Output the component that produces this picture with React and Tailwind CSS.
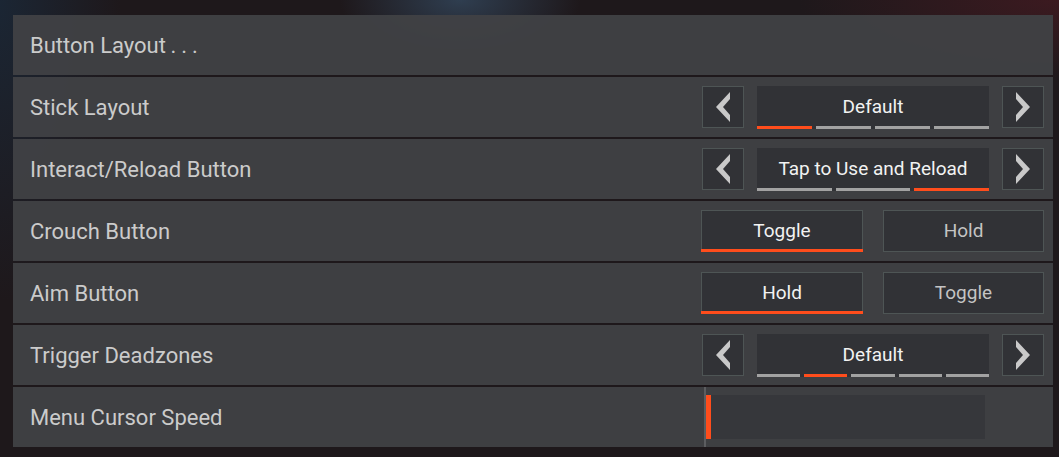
const ORANGE = 'bg-[#ff4d1c]';

function Arrow({ dir }) {
  const pts = dir === 'left' ? '28,6 28,13 21,21 28,29 28,36 14,21' : '14,6 14,13 21,21 14,29 14,36 28,21';
  return (
    <div className="w-[42px] h-[42px] shrink-0 border border-[#4e5555] bg-[#313236] flex items-center justify-center">
      <svg width="40" height="40" viewBox="1 1 40 40">
        <polygon points={pts} fill="#c9c9c9" />
      </svg>
    </div>
  );
}

function Stepper({ value, count, active }) {
  return (
    <div className="flex items-start gap-[13px]">
      <Arrow dir="left" />
      <div className="w-[232px] flex flex-col">
        <div className="h-[40px] pt-[3px] bg-[#313236] flex items-center justify-center text-[19px] text-[#f2f2f2]">
          {value}
        </div>
        <div className="flex gap-[4px] bg-[#313236]">
          {Array.from({ length: count }).map((_, i) => (
            <div key={i} className={`flex-1 h-[3px] ${i === active ? ORANGE : 'bg-[#a2a2a2]'}`} />
          ))}
        </div>
      </div>
      <Arrow dir="right" />
    </div>
  );
}

function Choice({ options, active }) {
  return (
    <div className="flex gap-[20px]">
      {options.map((opt, i) =>
        i === active ? (
          <div key={opt} className="w-[162px] h-[42px] flex flex-col">
            <div className="h-[39px] border border-b-0 border-[#4e5555] bg-[#313236] flex items-center justify-center text-[19px] text-[#f2f2f2] pt-[2px]">
              {opt}
            </div>
            <div className={`h-[3px] ${ORANGE}`} />
          </div>
        ) : (
          <div key={opt} className="w-[161px] h-[42px] border border-[#4e5555] bg-[#313236] flex items-center justify-center text-[19px] text-[#c4c4c4]">
            {opt}
          </div>
        )
      )}
    </div>
  );
}

function Row({ label, children }) {
  return (
    <div className="h-[60px] bg-[#404145]/95 flex items-center justify-between pl-[17px] pr-[9px]">
      <span className="text-[22px] text-[#cbcbcb]">{label}</span>
      {children}
    </div>
  );
}

export default function App() {
  return (
    <div
      className="w-[1059px] h-[457px] overflow-hidden pt-[15px] pl-[13px] bg-[#1e181b] bg-[radial-gradient(ellipse_120px_60px_at_460px_0px,#2f3e50_0%,transparent_100%),radial-gradient(ellipse_260px_80px_at_1059px_0px,#3c1a20_0%,transparent_100%),radial-gradient(ellipse_120px_300px_at_0px_0px,#1b2634_0%,transparent_100%)]"
      style={{ fontFamily: 'Roboto, "Noto Sans", sans-serif' }}
    >
      <div className="w-[1040px] flex flex-col gap-[2px]">
        <Row
          label={
            <>
              Button Layout <span className="tracking-[5px] -ml-[1px]">...</span>
            </>
          }
        />
        <Row label="Stick Layout">
          <Stepper value="Default" count={4} active={0} />
        </Row>
        <Row label="Interact/Reload Button">
          <Stepper value="Tap to Use and Reload" count={3} active={2} />
        </Row>
        <Row label="Crouch Button">
          <Choice options={['Toggle', 'Hold']} active={0} />
        </Row>
        <Row label="Aim Button">
          <Choice options={['Hold', 'Toggle']} active={0} />
        </Row>
        <Row label="Trigger Deadzones">
          <Stepper value="Default" count={5} active={1} />
        </Row>
        <div className="h-[60px] bg-[#404145]/95 flex items-center pl-[17px]">
          <span className="text-[22px] text-[#cbcbcb] w-[674px]">Menu Cursor Speed</span>
          <div className="h-full w-[2px] bg-[#5c5d60]" />
          <div className="w-[279px] h-[44px] bg-[#36373b] flex">
            <div className={`w-[5px] h-full ${ORANGE}`} />
          </div>
        </div>
      </div>
    </div>
  );
}
